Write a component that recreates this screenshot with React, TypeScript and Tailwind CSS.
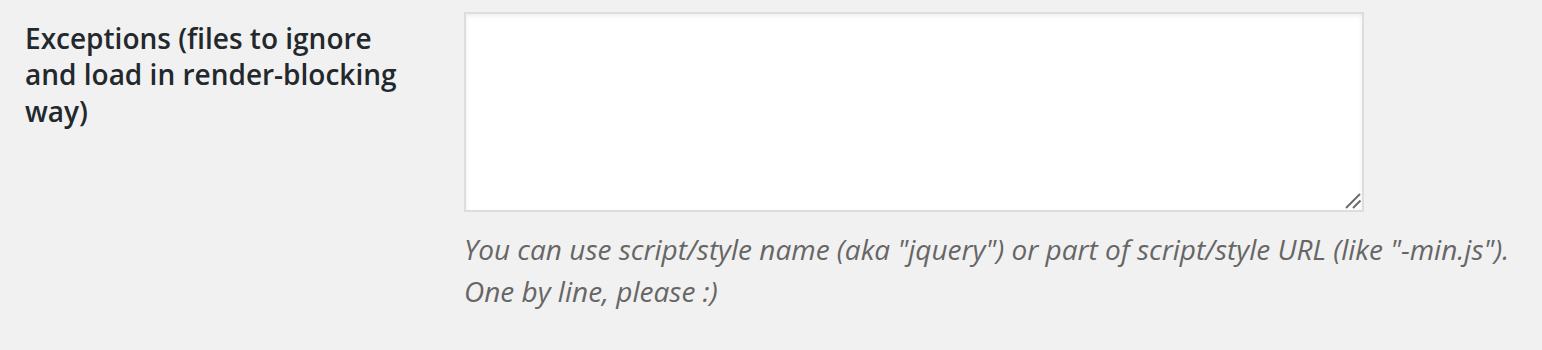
const App = () => {
  return (
    <div className="min-h-[350px] w-full bg-[#f1f1f1] font-['Open_Sans',sans-serif]">
      <div className="flex pt-[12px]">
        <div className="w-[464px] shrink-0 pl-[25px] pr-[45px] pt-[8px]">
          <label
            htmlFor="exceptions"
            className="block text-[28px] leading-[36.4px] font-semibold text-[#23282d]"
          >
            Exceptions (files to ignore and load in render-blocking way)
          </label>
        </div>
        <div className="flex flex-col">
          <div className="relative h-[200px] w-[900px]">
            <textarea
              id="exceptions"
              className="block h-full w-full resize-none border-2 border-[#dddddd] bg-white shadow-[inset_0_2px_4px_rgba(0,0,0,0.07)] outline-none"
            />
            {/* resize grip */}
            <svg
              className="pointer-events-none absolute right-[2px] bottom-[2px]"
              width="18"
              height="18"
              viewBox="0 0 18 18"
            >
              <line x1="16" y1="2" x2="2" y2="16" stroke="#6b6b6b" strokeWidth="2" />
              <line x1="16.5" y1="8.5" x2="9" y2="16" stroke="#6b6b6b" strokeWidth="2" />
            </svg>
          </div>
          <p className="mt-[16px] text-[28px] leading-[42px] italic text-[#666666]">
            You can use script/style name (aka "jquery") or part of script/style URL (like "-min.js").
            <br />
            One by line, please :)
          </p>
        </div>
      </div>
    </div>
  );
};

export default App;
